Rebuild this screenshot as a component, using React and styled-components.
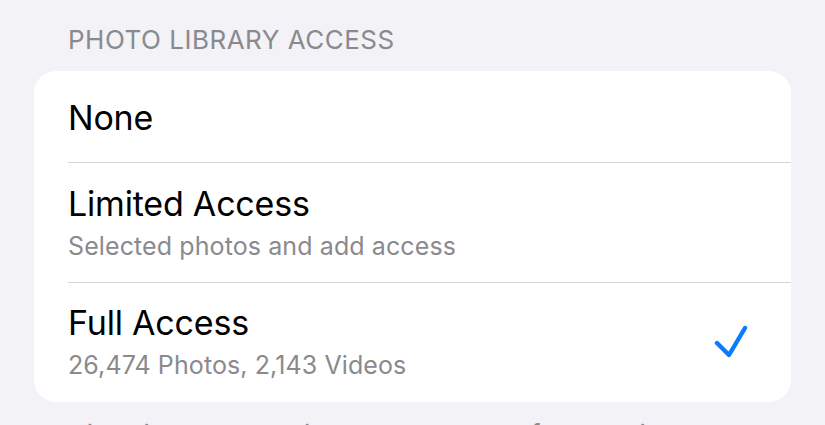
import React from "react";
import styled, { createGlobalStyle } from "styled-components";

const Global = createGlobalStyle`
  html, body {
    margin: 0;
    padding: 0;
    background: #f2f2f7;
    overflow: hidden;
  }
  body {
    font-family: Inter, "Noto Sans", "Liberation Sans", sans-serif;
    -webkit-font-smoothing: antialiased;
  }
`;

const Page = styled.div`
  width: 825px;
  height: 425px;
  box-sizing: border-box;
  padding: 24px 34px 0 34px;
  background: #f2f2f7;
  overflow: hidden;
`;

const SectionHeader = styled.div`
  padding-left: 34px;
  font-size: 26px;
  line-height: 32px;
  color: #8a8a8e;
  letter-spacing: 0.5px;
  margin-bottom: 15px;
`;

const Card = styled.div`
  background: #ffffff;
  border-radius: 22px;
  overflow: hidden;
`;

const Row = styled.div`
  position: relative;
  display: flex;
  align-items: center;
  padding: ${(p) => p.$pad};
  padding-left: 34px;
  padding-right: 42px;
  &:not(:last-child) {
    border-bottom: 1px solid transparent;
  }
  &:not(:last-child)::after {
    content: "";
    position: absolute;
    left: 34px;
    right: 0;
    bottom: -1px;
    height: 1px;
    background: #d6d6d9;
  }
`;

const TextCol = styled.div`
  flex: 1;
  display: flex;
  flex-direction: column;
`;

const Title = styled.div`
  font-size: 34px;
  line-height: 41px;
  color: #000;
  letter-spacing: -0.2px;
`;

const Subtitle = styled.div`
  margin-top: 7px;
  font-size: 25px;
  line-height: 30px;
  color: #8a8a8e;
  letter-spacing: 0.1px;
`;

const Footer = styled.div`
  padding-left: 34px;
  margin-top: 17px;
  font-size: 26px;
  line-height: 32px;
  color: #8a8a8e;
`;

const Check = () => (
  <svg width="36" height="33" viewBox="0 0 36 33" fill="none">
    <path
      d="M4 18 L16 30 L32 3"
      stroke="#0a7aff"
      strokeWidth="4.4"
      strokeLinecap="round"
      strokeLinejoin="round"
    />
  </svg>
);

const options = [
  { title: "None", pad: "26px 0 24px" },
  { title: "Limited Access", sub: "Selected photos and add access", pad: "20px 0 21px" },
  { title: "Full Access", sub: "26,474 Photos, 2,143 Videos", pad: "19px 0 22px", checked: true },
];

export default function App() {
  return (
    <>
      <Global />
      <Page>
        <SectionHeader>PHOTO LIBRARY ACCESS</SectionHeader>
        <Card>
          {options.map((o) => (
            <Row key={o.title} $pad={o.pad}>
              <TextCol>
                <Title>{o.title}</Title>
                {o.sub && <Subtitle>{o.sub}</Subtitle>}
              </TextCol>
              {o.checked && <Check />}
            </Row>
          ))}
        </Card>
        <Footer>Disabling access will prevent the app from seeing your library.</Footer>
      </Page>
    </>
  );
}
